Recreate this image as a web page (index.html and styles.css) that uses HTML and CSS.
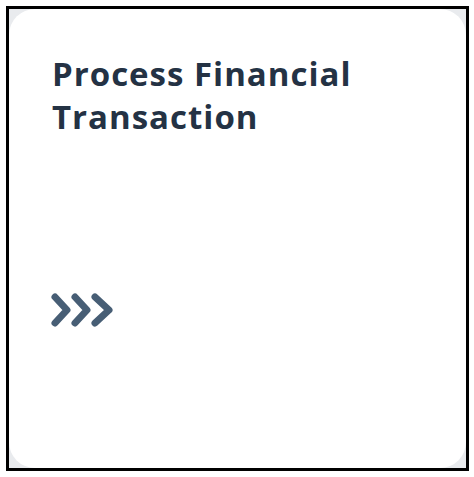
FILE: index.html
```html
<!DOCTYPE html>
<html>
<head>
<meta charset="utf-8">
<link rel="stylesheet" href="styles.css">
</head>
<body>
<div class="frame">
  <div class="tile">
    <div class="title">Process Financial Transaction</div>
    <svg class="icon" width="68" height="40" viewBox="0 0 68 40">
      <g fill="none" stroke="#475e75" stroke-width="7" stroke-linecap="round" stroke-linejoin="round">
        <polyline points="5,7 17,20 5,33"/>
        <polyline points="25,7 37,20 25,33"/>
        <polyline points="45,7 59,20 45,33"/>
      </g>
    </svg>
  </div>
</div>
</body>
</html>
```
FILE: styles.css
```css
html, body {
  margin: 0;
  padding: 0;
  background: #ffffff;
}
.frame {
  margin: 6px 0 0 6px;
  width: 463px;
  height: 465px;
  box-sizing: border-box;
  border: 3px solid #000000;
  background: #e9ebee;
  display: flex;
}
.tile {
  flex: 1;
  background: #ffffff;
  border-radius: 26px;
  padding: 43px 40px 0 43px;
  display: flex;
  flex-direction: column;
  align-items: flex-start;
}
.title {
  font-family: "Open Sans", "Noto Sans", sans-serif;
  font-weight: 700;
  font-size: 33px;
  line-height: 43px;
  letter-spacing: 1px;
  color: #243244;
  width: 345px;
}
.icon {
  display: block;
  margin-top: 152px;
  margin-left: -2px;
}
```
